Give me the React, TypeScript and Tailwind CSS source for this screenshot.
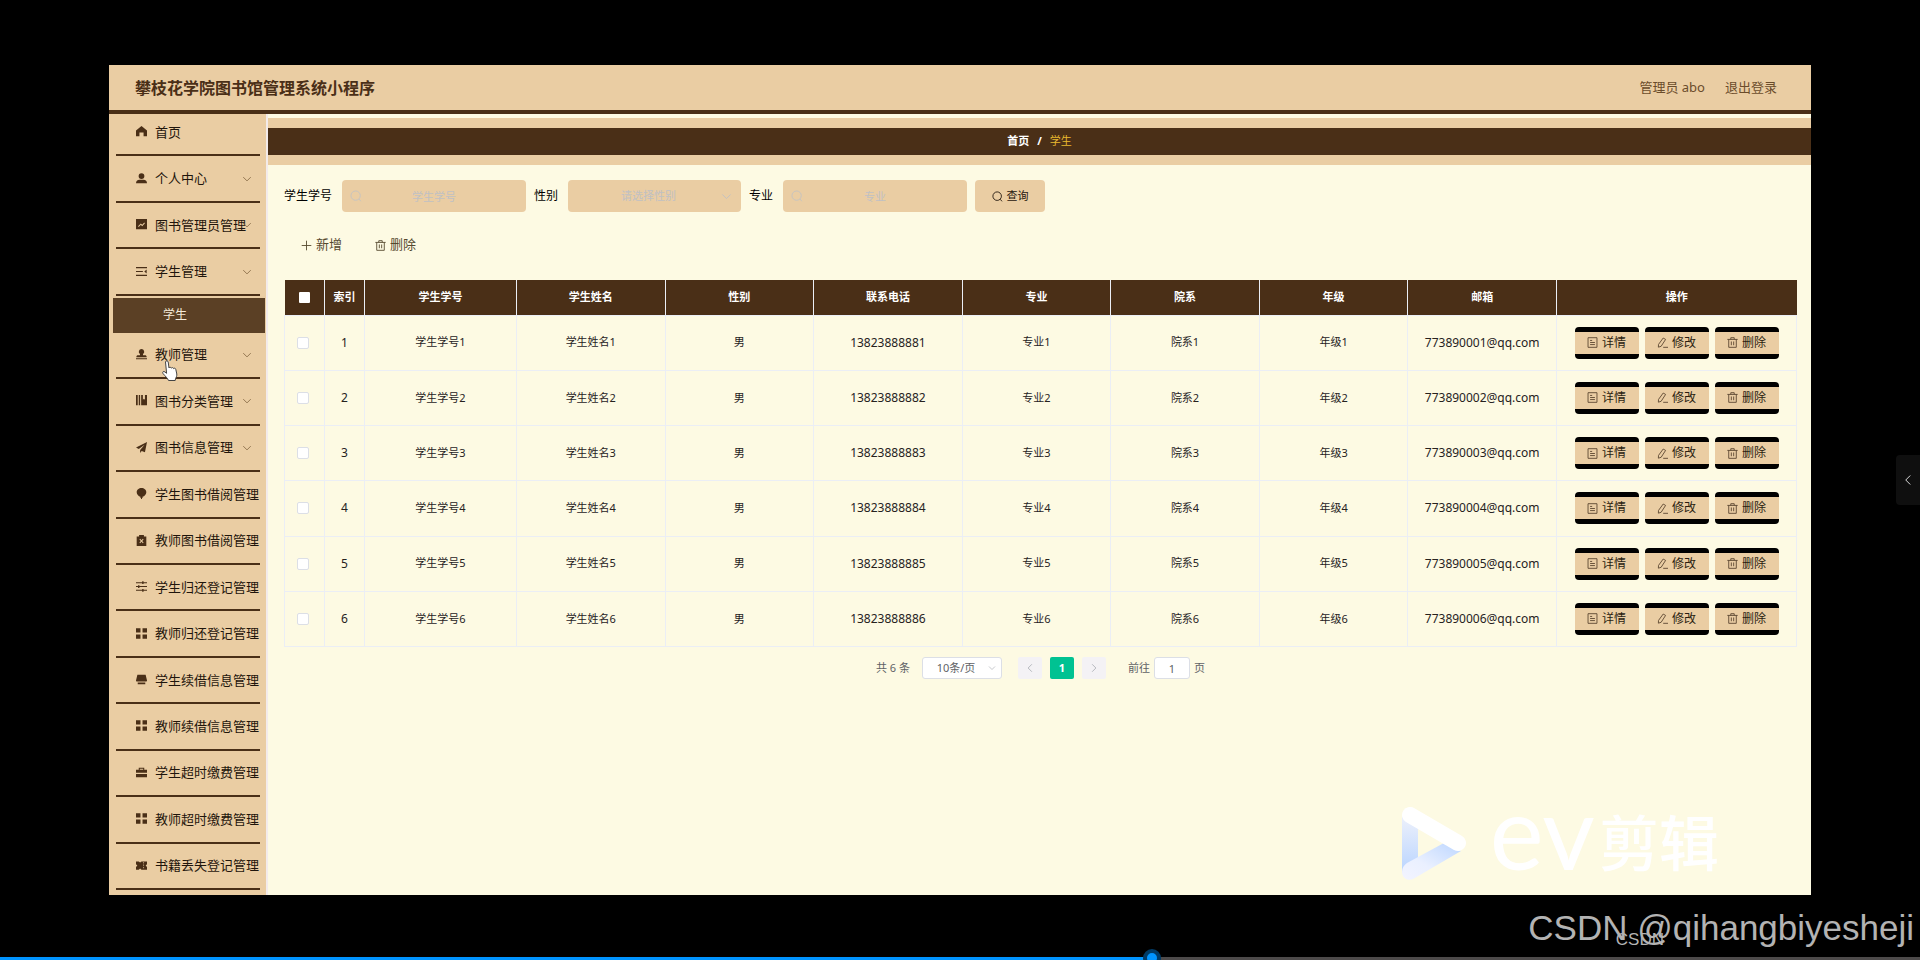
import React, { useState } from 'react';

type IconProps = { className?: string };

function Solid({ className = 'size-[11px]', children }: IconProps & { children: React.ReactNode }) {
  return (
    <svg viewBox="0 0 16 16" fill="currentColor" className={`shrink-0 ${className}`} aria-hidden="true">
      {children}
    </svg>
  );
}

function Line({ className = 'size-[11px]', children }: IconProps & { children: React.ReactNode }) {
  return (
    <svg viewBox="0 0 16 16" fill="none" stroke="currentColor" strokeWidth="1.3" className={`shrink-0 ${className}`} aria-hidden="true">
      {children}
    </svg>
  );
}

const HomeIcon = () => <Solid><path d="M8 0 0 6.500V15h5V9.500h6V15h5V6.500z" /></Solid>;
const UserIcon = () => <Solid><circle cx="8" cy="4.500" r="4.200" /><path d="M0 15c0-3.500 2-5 5-5.300h6c3 .3 5 1.800 5 5.300z" /></Solid>;
const MarketingIcon = () => <Solid><path fillRule="evenodd" d="M0 0h16v15H0zM3 10.500l1 1 3-3 2 2 4-4.500-1-1-3 3.500-2-2z" /></Solid>;
const MenuIcon = () => <Solid><path d="M0 1.500h16v1.700H0zM0 12.800h16v1.700H0zM0 7.200h10v1.700H0zM15.500 5v6L12 8z" /></Solid>;
const StampIcon = () => <Solid><path d="M8 0a4 4 0 0 0-2.200 7.300V9H3c-1.500 0-2.500.8-2.500 3h15c0-2.200-1-3-2.500-3h-2.800V7.300A4 4 0 0 0 8 0zM0 13.300h16V15H0z" /></Solid>;
const BooksIcon = () => <Solid><path d="M0 0h2.500v15H0zM4 0h2v15H4zM7.500 0H10v7l1.500-1.500L13 7V0h3v15H7.500z" /></Solid>;
const PlaneIcon = () => <Solid><path d="M16 0 0 8l4 2.200L12.500 4 6 11.500V16l2.300-3L13 15z" /></Solid>;
const BalloonIcon = () => <Solid><path d="M8 0C4.200 0 1 2.600 1 6.200c0 3 2.500 5.800 5.500 6.600L6 14.300h1.300V16h1.400v-1.700H10l-.5-1.500c3-.8 5.500-3.600 5.500-6.600C15 2.600 11.800 0 8 0z" /></Solid>;
const ClipboardIcon = () => <Solid><path fillRule="evenodd" d="M1 2h3.500V0h7v2H15v14H1zM5 6.500 7 8.800 5 11l1 1 2-2.200L10 12l1-1-2-2.200 2-2.300-1-1-2 2.200-2-2.200z" /></Solid>;
const SlidersIcon = () => (
  <Solid><path d="M0 1.800h9V.5h2v1.300h5v1.400h-5v1.300H9V3.200H0zM0 7.300h3V6h2v1.300h11v1.400H5V10H3V8.700H0zM0 12.800h9v-1.300h2v1.300h5v1.400h-5v1.300H9v-1.300H0z" /></Solid>
);
const GridIcon = () => <Solid><path d="M0 .5h6.500v6H0zM9.500.5H16v6H9.500zM0 9.500h6.500v6H0zM9.500 9.500H16v6H9.500z" /></Solid>;
const PrinterIcon = () => <Solid><path d="M2 1h12l2 8.500c0 .8-.6 1.500-1.500 1.500h-13C.6 11 0 10.300 0 9.500zM2.500 12.500h11V15h-11z" /></Solid>;
const BagIcon = () => <Solid><path fillRule="evenodd" d="M4 4V1h8v3h4v4.500H0V4zm1.500 0h5V2.500h-5zM0 10h16v5H0z" /></Solid>;
const TicketIcon = () => <Solid><path d="M0 2h4l2 1.500L8 2h8v4l-2 2 2 2v4H8l-2-1.500L4 14H0v-4l2-2-2-2z" /><path d="M11 3v10" stroke="#eacda3" strokeDasharray="2 1.500" /></Solid>;

const SearchIcon = (p: IconProps) => <Line {...p}><circle cx="7.500" cy="7.500" r="6.200" /><path d="m12 12 2.500 3" /></Line>;
const PlusIcon = (p: IconProps) => <Line {...p}><path d="M8 1v14M1 8h14" /></Line>;
const TrashIcon = (p: IconProps) => <Line {...p}><path d="M.5 3.500h15M2.500 3.500v11.500h11V3.500M5.500 3.500V1h5v2.500M6.300 6.500v5.500M9.700 6.500v5.500" /></Line>;
const DocIcon = (p: IconProps) => <Line {...p}><path d="M1.500 1h13v14h-13zM4.500 5h3M4.500 8h7M4.500 11h7" /></Line>;
const EditIcon = (p: IconProps) => <Line {...p}><path d="M9 1.500 12.500 3.500 6 13.500l-4 1.300.2-4zM9 15h7" /></Line>;
const ChevronDown = (p: IconProps) => <Line {...p}><path d="m2 5 6 6 6-6" /></Line>;
const ChevronLeft = (p: IconProps) => <Line {...p}><path d="M11 2 5 8l6 6" /></Line>;
const ChevronRight = (p: IconProps) => <Line {...p}><path d="m5 2 6 6-6 6" /></Line>;

type MenuEntry = { label: string; icon: () => React.ReactElement; expandable?: boolean; child?: string };

const menu: MenuEntry[] = [
  { label: '首页', icon: HomeIcon },
  { label: '个人中心', icon: UserIcon, expandable: true },
  { label: '图书管理员管理', icon: MarketingIcon, expandable: true },
  { label: '学生管理', icon: MenuIcon, expandable: true, child: '学生' },
  { label: '教师管理', icon: StampIcon, expandable: true },
  { label: '图书分类管理', icon: BooksIcon, expandable: true },
  { label: '图书信息管理', icon: PlaneIcon, expandable: true },
  { label: '学生图书借阅管理', icon: BalloonIcon },
  { label: '教师图书借阅管理', icon: ClipboardIcon },
  { label: '学生归还登记管理', icon: SlidersIcon },
  { label: '教师归还登记管理', icon: GridIcon },
  { label: '学生续借信息管理', icon: PrinterIcon },
  { label: '教师续借信息管理', icon: GridIcon },
  { label: '学生超时缴费管理', icon: BagIcon },
  { label: '教师超时缴费管理', icon: GridIcon },
  { label: '书籍丢失登记管理', icon: TicketIcon },
];

const columns = ['学生学号', '学生姓名', '性别', '联系电话', '专业', '院系', '年级', '邮箱'];

const students = [1, 2, 3, 4, 5, 6].map((n) => ({
  id: n,
  cells: [`学生学号${n}`, `学生姓名${n}`, '男', `1382388888${n}`, `专业${n}`, `院系${n}`, `年级${n}`, `77389000${n}@qq.com`],
}));

// phone and e-mail hold latin text only and are set one step larger
const isLatin = (text: string) => /^[\x20-\x7e]+$/.test(text);

function Sidebar() {
  return (
    <nav className="w-[159px] shrink-0 border-r-2 border-[#f3ebea] bg-[#eacda3]">
      <ul className="-mt-1 flex h-full flex-col pb-px">
        {menu.map(({ label, icon: Icon, expandable, child }) => (
          <React.Fragment key={label}>
            <li className="relative mr-[6px] ml-[7px] flex flex-1 border-b-2 border-[#4a2f17]">
              <a href="#" className="flex w-full items-center pb-px pl-5 text-[13px] leading-5 whitespace-nowrap text-[#1f150c]">
                <span className="mr-2 flex text-[#4a2f17]"><Icon /></span>
                {label}
              </a>
              {expandable && <ChevronDown className="pointer-events-none absolute inset-y-0 right-2 my-auto size-[10px] text-[#80643f]" />}
            </li>
            {child && (
              <li className="mt-[2px] mr-px ml-1 bg-[#5b4025]">
                <a href="#" className="flex h-[35px] items-center pl-[50px] text-[12px] text-[#f4ead9]">{child}</a>
              </li>
            )}
          </React.Fragment>
        ))}
      </ul>
    </nav>
  );
}

function SearchInput({ id, placeholder }: { id: string; placeholder: string }) {
  return (
    <div className="relative mr-2">
      <SearchIcon className="absolute top-[10px] left-2 size-3 text-[#c5c3c0]" />
      <input
        id={id}
        placeholder={placeholder}
        className="block h-8 w-[184px] rounded bg-[#eacda3] px-7 text-center text-[11px] outline-none placeholder:text-[#c0c0c4]"
      />
    </div>
  );
}

function ActionButton({ icon, children }: { icon: React.ReactNode; children: string }) {
  return (
    <button className="flex h-8 w-16 items-center justify-center gap-1 rounded border-y-[5px] border-black bg-[#eacda3] text-[12px] text-[#2a1d10]">
      <span className="text-[#5b4630]">{icon}</span>
      {children}
    </button>
  );
}

function StudentTable() {
  return (
    <table className="h-[367px] w-full table-fixed border-collapse text-center text-[11px] text-[#26221e]">
      <colgroup>
        <col className="w-10" />
        <col className="w-10" />
        <col className="w-[152px]" />
        {columns.slice(1).map((c) => <col key={c} />)}
        <col className="w-60" />
      </colgroup>
      <thead className="bg-[#4a2f17] text-white">
        <tr className="h-[35px]">
          <th className="border-r border-[#ebeef5]">
            <input type="checkbox" aria-label="全选" className="mx-auto block size-[11px] appearance-none rounded-[1px] bg-white" />
          </th>
          <th className="border-r border-[#ebeef5] font-bold">索引</th>
          {columns.map((c) => <th key={c} className="border-r border-[#ebeef5] font-bold">{c}</th>)}
          <th className="font-bold">操作</th>
        </tr>
      </thead>
      <tbody>
        {students.map((s) => (
          <tr key={s.id} className="h-[55px]">
            <td className="border border-[#ebeef5] pr-[3px]">
              <input type="checkbox" aria-label={`选择 ${s.id}`} className="mx-auto block size-3 appearance-none rounded-[2px] border border-[#dcdfe6] bg-white checked:bg-[#00c292]" />
            </td>
            <td className="border border-[#ebeef5] text-[12px]">{s.id}</td>
            {s.cells.map((c, i) => (
              <td key={i} className={isLatin(c) ? 'border border-[#ebeef5] text-[12px]' : 'border border-[#ebeef5]'}>{c}</td>
            ))}
            <td className="border border-[#ebeef5]">
              <div className="flex justify-center gap-[6px]">
                <ActionButton icon={<DocIcon />}>详情</ActionButton>
                <ActionButton icon={<EditIcon />}>修改</ActionButton>
                <ActionButton icon={<TrashIcon />}>删除</ActionButton>
              </div>
            </td>
          </tr>
        ))}
      </tbody>
    </table>
  );
}

function Pagination() {
  const [page, setPage] = useState('1');
  return (
    <div className="mt-[10px] flex items-center justify-center text-[11px] text-[#606266]">
      <span className="mr-3">共 6 条</span>
      <div className="relative mr-4">
        <select aria-label="每页条数" className="block h-[22px] w-20 appearance-none rounded-[3px] border border-[#dcdfe6] bg-white pr-3 text-[11px] [text-align-last:center]">
          <option>10条/页</option>
          <option>20条/页</option>
        </select>
        <ChevronDown className="pointer-events-none absolute top-[7px] right-[6px] size-2 text-[#a8abb2]" />
      </div>
      <div className="mr-[22px] flex gap-2">
        <button aria-label="上一页" className="flex h-[22px] w-6 items-center justify-center rounded-[2px] bg-[#f4f2f5] text-[#a8abb2]">
          <ChevronLeft className="size-[10px]" />
        </button>
        <button className="h-[22px] w-6 rounded-[2px] bg-[#00c292] font-bold text-white">1</button>
        <button aria-label="下一页" className="flex h-[22px] w-6 items-center justify-center rounded-[2px] bg-[#f4f2f5] text-[#a8abb2]">
          <ChevronRight className="size-[10px]" />
        </button>
      </div>
      <label className="flex items-center gap-1">
        前往
        <input value={page} onChange={(e) => setPage(e.target.value)} className="h-[22px] w-9 rounded-[3px] border border-[#dcdfe6] bg-white text-center outline-none" />
        页
      </label>
    </div>
  );
}

// Hand pointer recorded with the screen
function HandCursor() {
  return (
    <svg viewBox="0 0 17 22" className="pointer-events-none absolute top-[360px] left-[161px] h-[22px] w-[17px]" aria-hidden="true">
      <path
        d="M4.500 2c0-1.500 2.500-1.500 2.700 0l.8 6c.3-1 2-1 2.300.2.500-1 2-.8 2.300.4.600-.8 2-.4 2.200.8l1 4.600c.2 2-.6 3-1.200 4.500l-.4 2H7.500c-1-2.500-3-4-5.500-7-1-1.500.5-2.800 2-1.500l1.600 1.300z"
        fill="#fff"
        stroke="#444"
        strokeWidth="1"
      />
    </svg>
  );
}

function EvWatermark() {
  return (
    <div className="pointer-events-none absolute right-[201px] bottom-[66px] flex items-center text-white">
      <svg viewBox="0 0 64 73" className="mr-[24px] h-[73px] w-16" aria-hidden="true">
        <defs>
          <linearGradient id="side" x1="0" y1="0" x2="0" y2="1">
            <stop offset="0" stopColor="#eef1fb" />
            <stop offset="1" stopColor="#b9d4ff" />
          </linearGradient>
          <linearGradient id="base" x1="0" y1="1" x2="1" y2="0">
            <stop offset="0" stopColor="#f3f4ff" />
            <stop offset=".4" stopColor="#eaf0ff" />
            <stop offset="1" stopColor="#bcd6ff" />
          </linearGradient>
        </defs>
        <path d="M0 8h16v46L0 66z" fill="url(#side)" />
        <path d="M41 36.500 59 44 12 71.500C6 75 0 71 0 65c0-4 2-7 5-9z" fill="url(#base)" />
        <path d="M8 8 56 36" stroke="#fff" strokeWidth="16" strokeLinecap="round" />
      </svg>
      <span className="pb-6 font-['Lato'] text-[102px] leading-[78px]">ev</span>
      <span className="ml-1 text-[60px] leading-[78px] font-medium">剪辑</span>
    </div>
  );
}

function PlayerBar() {
  const [progress, setProgress] = useState(60);
  return (
    <div className="absolute inset-x-0 bottom-0 h-[3px] bg-[#4d4a4a]">
      <div className="h-full bg-[#0094ff]" style={{ width: `${progress}%` }} />
      <div
        className="absolute -top-2 size-[18px] -translate-x-1/2 rounded-full border-4 border-[#003b66] bg-[#0094ff]"
        style={{ left: `${progress}%` }}
      />
      <input
        type="range"
        aria-label="播放进度"
        value={progress}
        onChange={(e) => setProgress(Number(e.target.value))}
        className="absolute inset-0 w-full opacity-0"
      />
    </div>
  );
}

export default function App() {
  return (
    <div className="relative flex min-h-screen flex-col overflow-hidden bg-black px-[109px] py-[65px] font-['Noto_Sans','Noto_Sans_CJK_SC',sans-serif]">
      <header className="flex h-[49px] items-center justify-between border-b-4 border-[#4a2f17] bg-[#eacda3] pr-[34px] pl-[26px] text-[#4a2f17]">
        <h1 className="text-[16px] font-bold">攀枝花学院图书馆管理系统小程序</h1>
        <div className="flex gap-5 text-[13px] text-[#6a4c2b]">
          <span>管理员 abo</span>
          <a href="#">退出登录</a>
        </div>
      </header>

      <div className="flex flex-1">
        <Sidebar />

        <main className="min-w-0 flex-1 bg-[#fdfae3]">
          {/* 面包屑 */}
          <div className="mt-1 border-t-10 border-b-10 border-[#eacda3] bg-[#4a2f17]">
            <nav className="flex h-[27px] items-center justify-center gap-2 text-[11px] text-white">
              <a href="#" className="font-bold">首页</a>
              <span className="font-bold">/</span>
              <span className="text-[#e8b92f]">学生</span>
            </nav>
          </div>

          <div className="pt-[15px] pr-[14px] pl-4">
            {/* 查询条件 */}
            <form className="flex items-center text-[12px] text-black" onSubmit={(e) => e.preventDefault()}>
              <label htmlFor="sno" className="mr-[10px]">学生学号</label>
              <SearchInput id="sno" placeholder="学生学号" />
              <label htmlFor="gender" className="mr-[10px]">性别</label>
              <div className="relative mr-2">
                <select id="gender" className="block h-8 w-[173px] appearance-none rounded bg-[#eacda3] pr-3 text-[11px] text-[#c0c0c4] [text-align-last:center]">
                  <option>请选择性别</option>
                  <option>男</option>
                  <option>女</option>
                </select>
                <ChevronDown className="pointer-events-none absolute top-[11px] right-[9px] size-[11px] text-[#c0c0c4]" />
              </div>
              <label htmlFor="major" className="mr-[10px]">专业</label>
              <SearchInput id="major" placeholder="专业" />
              <button className="flex h-8 w-[70px] items-center justify-center gap-1 rounded bg-[#eacda3] text-[11px] text-[#1f150c]">
                <SearchIcon />
                查询
              </button>
            </form>

            <div className="mt-[17px] mb-[19px] flex h-8 items-center gap-[33px] pl-[17px] text-[13px] text-[#55492f]">
              <button className="flex items-center gap-1"><PlusIcon />新增</button>
              <button className="flex items-center gap-1"><TrashIcon />删除</button>
            </div>

            <StudentTable />
            <Pagination />
          </div>
        </main>
      </div>

      <HandCursor />
      <EvWatermark />

      <button aria-label="展开侧栏" className="absolute top-[455px] right-0 flex h-[50px] w-6 items-center justify-center rounded-l bg-[#0f0f0f] text-[#ddd]">
        <ChevronLeft className="size-3" />
      </button>

      <span className="absolute right-[6px] bottom-[12px] font-['Liberation_Sans'] text-[35px] leading-10 whitespace-nowrap text-[#b3b3b3]">CSDN @qihangbiyesheji</span>
      <span className="absolute right-[256px] bottom-[10px] font-['Liberation_Sans'] text-[17px] leading-5 text-[#b3b3b3]">CSDN</span>
      <PlayerBar />
    </div>
  );
}
